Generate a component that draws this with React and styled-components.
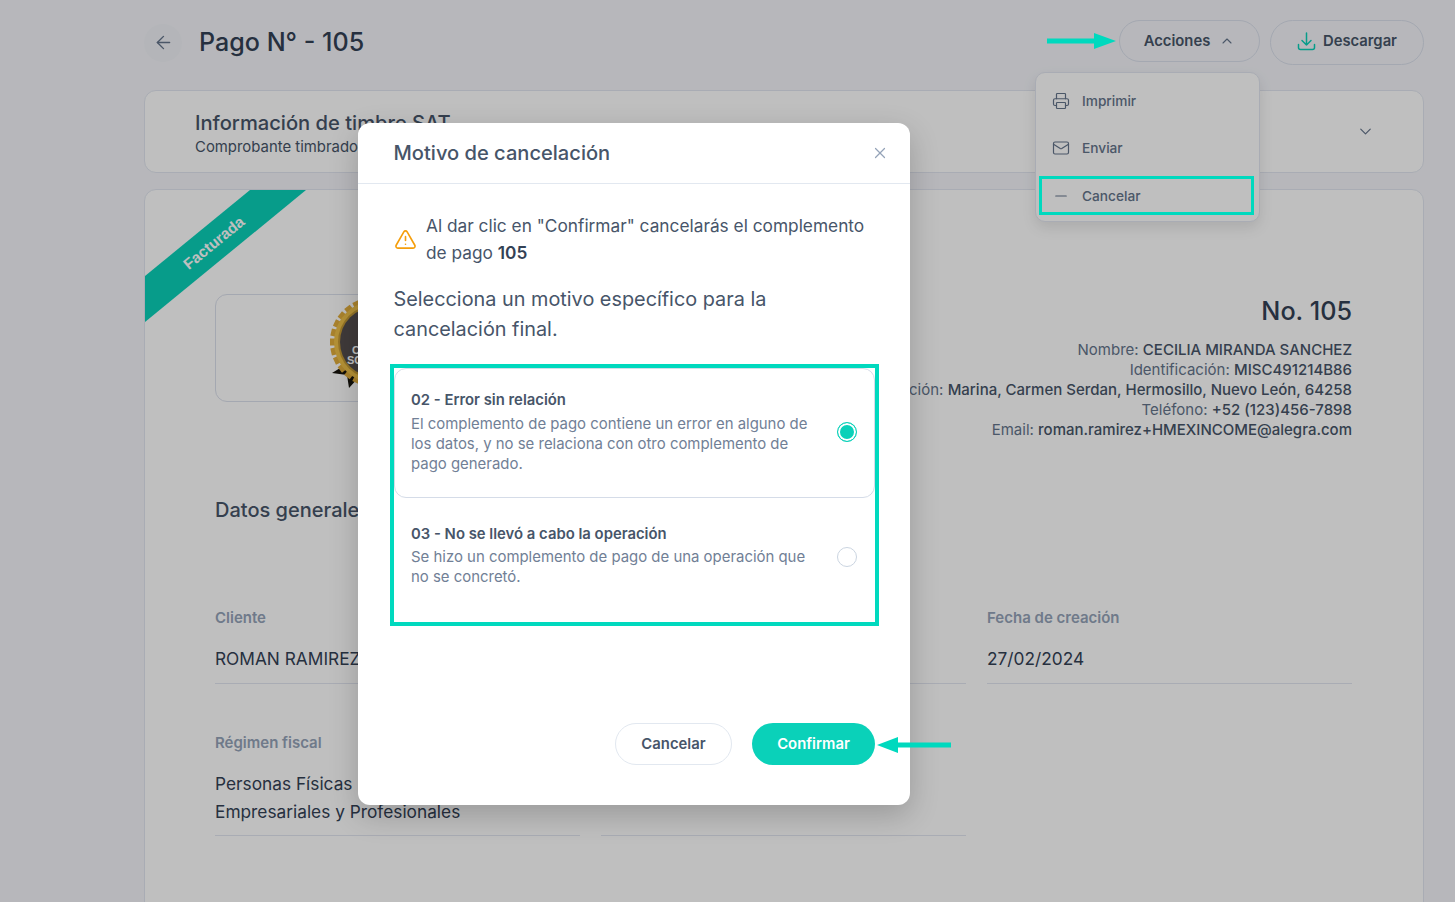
import styled, { createGlobalStyle } from 'styled-components';
import { ArrowLeft, ChevronDown, ChevronUp, Mail, Minus, Printer, TriangleAlert, X } from 'lucide-react';

const GlobalStyle = createGlobalStyle`
  html, body {
    margin: 0;
    height: 100%;
    overflow: hidden;
    background: #f4f5fa;
    font-family: Inter, "Noto Sans", sans-serif;
    color: #334155;
  }
  * { box-sizing: border-box; }
  #root { height: 100%; }
`;

const TEAL = '#00d9be';

export default function App() {
  return (
    <>
      <GlobalStyle />
      <Page>
        <Header>
          <TitleGroup>
            <BackButton><ArrowLeft size={21} strokeWidth={1.6} /></BackButton>
            <Title>Pago N° - 105</Title>
          </TitleGroup>
          <Actions>
            <ActionsWrap>
              <PillButton $width={141} $height={42}>
                Acciones <ActionsChevron size={16} color="#64748b" strokeWidth={1.6} />
              </PillButton>
              <Menu>
                <MenuItem><Printer size={18} strokeWidth={1.6} />Imprimir</MenuItem>
                <MenuItem><Mail size={18} strokeWidth={1.6} />Enviar</MenuItem>
                <MenuItem><Minus size={18} strokeWidth={1.6} />Cancelar</MenuItem>
              </Menu>
            </ActionsWrap>
            <PillButton $width={154} $height={45}>
              <DownloadIcon />
              Descargar
            </PillButton>
          </Actions>
        </Header>

        <StampCard>
          <div>
            <CardTitle>Información de timbre SAT</CardTitle>
            <CardSubtitle>Comprobante timbrado</CardSubtitle>
          </div>
          <StampChevron size={19} color="#64748b" strokeWidth={1.5} />
        </StampCard>

        <DetailCard>
          <Ribbon><RibbonText>Facturada</RibbonText></Ribbon>
          <TopRow>
            <LogoBox><Seal /></LogoBox>
            <Summary>
              <Number>No. 105</Number>
              <Info>
                <div>Nombre: <b>CECILIA MIRANDA SANCHEZ</b></div>
                <div>Identificación: <b>MISC491214B86</b></div>
                <div>Dirección: <b>Marina, Carmen Serdan, Hermosillo, Nuevo León, 64258</b></div>
                <div>Teléfono: <b>+52 (123)456-7898</b></div>
                <div>Email: <b>roman.ramirez+HMEXINCOME@alegra.com</b></div>
              </Info>
            </Summary>
          </TopRow>
          <SectionTitle>Datos generales</SectionTitle>
          <Fields>
            <Field>
              <FieldLabel>Cliente</FieldLabel>
              <FieldValue>ROMAN RAMIREZ</FieldValue>
            </Field>
            <Field>
              <FieldLabel />
              <FieldValue />
            </Field>
            <Field>
              <FieldLabel>Fecha de creación</FieldLabel>
              <FieldValue>27/02/2024</FieldValue>
            </Field>
            <Field>
              <FieldLabel>Régimen fiscal</FieldLabel>
              <FieldValue>Personas Físicas<br />Empresariales y Profesionales</FieldValue>
            </Field>
            <Field>
              <FieldLabel />
              <FieldValue />
            </Field>
          </Fields>
        </DetailCard>
      </Page>

      <Overlay>
        <Modal>
          <ModalHeader>
            <ModalTitle>Motivo de cancelación</ModalTitle>
            <X size={18} color="#94a3b8" strokeWidth={1.6} />
          </ModalHeader>
          <ModalBody>
            <Warning>
              <TriangleAlert size={23} color="#f59e0b" strokeWidth={1.7} />
              <span>Al dar clic en "Confirmar" cancelarás el complemento de pago <b>105</b></span>
            </Warning>
            <Prompt>Selecciona un motivo específico para la cancelación final.</Prompt>
            <Options>
              <Option $selected>
                <OptionText>
                  <OptionTitle>02 - Error sin relación</OptionTitle>
                  <OptionDesc>El complemento de pago contiene un error en alguno de los datos, y no se relaciona con otro complemento de pago generado.</OptionDesc>
                </OptionText>
                <Radio $selected />
              </Option>
              <Option>
                <OptionText>
                  <OptionTitle>03 - No se llevó a cabo la operación</OptionTitle>
                  <OptionDesc>Se hizo un complemento de pago de una operación que no se concretó.</OptionDesc>
                </OptionText>
                <Radio />
              </Option>
            </Options>
          </ModalBody>
          <ModalFooter>
            <OutlineButton>Cancelar</OutlineButton>
            <ConfirmButton>Confirmar</ConfirmButton>
          </ModalFooter>
        </Modal>

        <TopArrow viewBox="0 0 69 16">
          <path d="M0 5.500h47V0l22 8-22 8v-5.500H0z" fill={TEAL} />
        </TopArrow>
        <BottomArrow viewBox="0 0 74 16">
          <path d="M74 5.500H21V0L0 8l21 8v-5.500h53z" fill={TEAL} />
        </BottomArrow>
        <MenuHighlight />
        <OptionsHighlight />
      </Overlay>
    </>
  );
}

function DownloadIcon() {
  return (
    <svg width="19" height="20" viewBox="0 0 19 20" fill="none" stroke="#0ad1b9" strokeWidth="1.5" strokeLinecap="round" strokeLinejoin="round">
      <path d="M9.500 2v12M5 9.500l4.500 4.500L14 9.500" />
      <path d="M1.500 13.500v3a2 2 0 0 0 2 2h12a2 2 0 0 0 2-2v-3" />
    </svg>
  );
}

// sello dorado del logo, casi todo queda tapado por el modal
function Seal() {
  const teeth = Array.from({ length: 28 }, (_, i) => i * (360 / 28));
  return (
    <svg width="92" height="92" viewBox="0 0 92 92">
      <path d="M3 76 16 68l14 12-10 11-2-13z" fill="#17140d" />
      <path d="M89 76 76 68 62 80l10 11 2-13z" fill="#17140d" />
      {teeth.map((a) => (
        <rect key={a} x="42.500" y="0" width="7" height="8" fill="#e2ae3c" transform={`rotate(${a} 46 45)`} />
      ))}
      <circle cx="46" cy="45" r="41" fill="#f0c248" />
      <circle cx="46" cy="45" r="37" fill="#c59a34" />
      <circle cx="46" cy="45" r="35" fill="#544e4e" />
      <text x="23" y="57" fontSize="11" fontWeight="700" fill="#fff" fontFamily="Liberation Sans, sans-serif">CFD</text>
      <text x="18" y="67" fontSize="11" fontWeight="700" fill="#fff" fontFamily="Liberation Sans, sans-serif">SCS</text>
    </svg>
  );
}

const Page = styled.div`
  padding: 20px 31px 0 144px;
  display: flex;
  flex-direction: column;
`;

const Header = styled.header`
  display: flex;
  justify-content: space-between;
  align-items: center;
  height: 45px;
  margin-bottom: 25px;
`;

const TitleGroup = styled.div`
  display: flex;
  align-items: center;
  gap: 17px;
`;

const BackButton = styled.div`
  width: 38px;
  height: 38px;
  border-radius: 50%;
  background: #f1f2f7;
  color: #64748b;
  display: flex;
  align-items: center;
  justify-content: center;
`;

const Title = styled.h1`
  margin: 0;
  padding-bottom: 2px;
  font-size: 25.100px;
  font-weight: 500;
  color: #334155;
`;

const Actions = styled.div`
  display: flex;
  align-self: flex-start;
  gap: 10px;
`;

const ActionsWrap = styled.div`
  position: relative;
`;

const ActionsChevron = styled(ChevronUp)`
  margin-left: 2px;
`;

const PillButton = styled.div`
  width: ${(p) => p.$width}px;
  height: ${(p) => p.$height}px;
  border: 1px solid #dbe0ec;
  border-radius: 999px;
  display: flex;
  align-items: center;
  justify-content: center;
  gap: 7px;
  font-size: 14.800px;
  font-weight: 600;
  color: #475569;
  padding-bottom: ${(p) => (p.$height > 42 ? 4 : 1)}px;
`;

const Menu = styled.div`
  position: absolute;
  z-index: 1;
  top: 52px;
  right: 0;
  width: 225px;
  height: 150px;
  padding: 4px 0;
  background: #fff;
  border: 1px solid #e2e6f0;
  border-radius: 10px;
  box-shadow: 0 6px 14px rgba(0, 0, 0, 0.1);
`;

const MenuItem = styled.div`
  height: 47.500px;
  padding-left: 16px;
  display: flex;
  align-items: center;
  gap: 12px;
  font-size: 13.700px;
  font-weight: 500;
  color: #64748b;
`;

const Card = styled.section`
  background: #fff;
  border: 1px solid #e2e6f0;
  border-radius: 12px;
`;

const StampCard = styled(Card)`
  height: 83px;
  margin-bottom: 16px;
  padding: 4px 48px 0 50px;
  display: flex;
  align-items: center;
  justify-content: space-between;
`;

const StampChevron = styled(ChevronDown)`
  margin-top: -4px;
`;

const CardTitle = styled.div`
  font-size: 20.150px;
  font-weight: 500;
  line-height: 26px;
  color: #475569;
`;

const CardSubtitle = styled.div`
  font-size: 14.900px;
  line-height: 22px;
  color: #475569;
`;

const DetailCard = styled(Card)`
  position: relative;
  height: 900px;
  padding: 104px 71px 0 70px;
`;

const Ribbon = styled.div`
  position: absolute;
  top: 0;
  left: 0;
  width: 161px;
  height: 132px;
  background: #0ad1b9;
  clip-path: polygon(105px 0, 161px 0, 0 132px, 0 86px);
`;

const RibbonText = styled.span`
  position: absolute;
  left: 29px;
  top: 44px;
  width: 80px;
  text-align: center;
  font-family: "Liberation Sans", sans-serif;
  font-size: 15.400px;
  font-weight: 700;
  color: #fff;
  transform: rotate(-39.300deg);
`;

const TopRow = styled.div`
  display: flex;
  justify-content: space-between;
  align-items: flex-start;
`;

const LogoBox = styled.div`
  width: 320px;
  height: 108px;
  border: 1px solid #dbe0ec;
  border-radius: 12px;
  display: flex;
  align-items: center;
  justify-content: center;
  padding-bottom: 10px;
`;

const Summary = styled.div`
  text-align: right;
`;

const Number = styled.div`
  font-size: 25.200px;
  font-weight: 500;
  line-height: 34px;
  margin-bottom: 12px;
  color: #334155;
`;

const Info = styled.div`
  font-size: 15px;
  line-height: 20px;
  color: #64748b;

  b {
    font-weight: 500;
    color: #475569;
  }
`;

const SectionTitle = styled.h2`
  margin: 56px 0 84px;
  font-size: 20px;
  line-height: 28px;
  font-weight: 500;
  color: #475569;
`;

const Fields = styled.div`
  display: grid;
  grid-template-columns: repeat(3, 365px);
  column-gap: 21px;
  row-gap: 49px;
`;

const Field = styled.div`
  padding-bottom: 10px;
  border-bottom: 1px solid #e2e6f0;
`;

const FieldLabel = styled.div`
  min-height: 20px;
  margin-bottom: 17px;
  font-size: 15px;
  line-height: 20px;
  font-weight: 600;
  color: #94a3b8;
`;

const FieldValue = styled.div`
  min-height: 28px;
  font-size: 17.300px;
  line-height: 1.6;
  color: #334155;
`;

const Overlay = styled.div`
  position: absolute;
  z-index: 2;
  inset: 0;
  background: rgba(0, 0, 0, 0.25);
  padding: 123px 0 0 358px;
`;

const Modal = styled.div`
  width: 552px;
  height: 682px;
  background: #fff;
  border-radius: 12px;
  box-shadow: 0 10px 30px rgba(0, 0, 0, 0.2);
  display: flex;
  flex-direction: column;
`;

const ModalHeader = styled.div`
  height: 61px;
  flex-shrink: 0;
  padding: 0 21px 0 35.500px;
  border-bottom: 1px solid #e2e8f0;
  display: flex;
  align-items: center;
  justify-content: space-between;
`;

const ModalTitle = styled.h3`
  margin: 0;
  font-size: 20.100px;
  font-weight: 500;
  color: #475569;
`;

const ModalBody = styled.div`
  padding: 28px 35px 0 35.500px;
`;

const Warning = styled.div`
  display: flex;
  align-items: center;
  gap: 9.500px;
  font-size: 17.300px;
  line-height: 27px;
  color: #475569;

  svg {
    flex-shrink: 0;
  }

  b {
    font-weight: 600;
    color: #334155;
  }
`;

const Prompt = styled.p`
  margin: 18px 0 24px;
  font-size: 19.850px;
  line-height: 30px;
  color: #475569;
`;

const Options = styled.div`
  display: flex;
  flex-direction: column;
`;

const Option = styled.div`
  min-height: 112px;
  padding: 21px 17px 23px 16.500px;
  border: 1px solid ${(p) => (p.$selected ? '#d5dce8' : 'transparent')};
  border-radius: 12px;
  margin-bottom: 4px;
  display: flex;
  justify-content: space-between;
  gap: 20px;
`;

const OptionText = styled.div`
  flex: 1;
`;

const OptionTitle = styled.div`
  font-size: 14.850px;
  line-height: 20px;
  font-weight: 600;
  color: #475569;
  margin-bottom: 3.500px;
`;

const OptionDesc = styled.div`
  font-size: 14.930px;
  line-height: 20px;
  color: #718096;
`;

const Radio = styled.div`
  width: 20px;
  height: 20px;
  flex-shrink: 0;
  align-self: center;
  border-radius: 50%;
  border: 1px solid ${(p) => (p.$selected ? '#0ad1b9' : '#cbd5e1')};
  background: ${(p) => (p.$selected ? '#0ad1b9' : '#fff')};
  box-shadow: ${(p) => (p.$selected ? 'inset 0 0 0 2px #fff' : 'none')};
`;

const ModalFooter = styled.div`
  margin-top: auto;
  padding: 0 35px 40px;
  display: flex;
  justify-content: flex-end;
  gap: 20px;
`;

const OutlineButton = styled.div`
  width: 117px;
  height: 42px;
  padding-bottom: 1px;
  border: 1px solid #e2e8f0;
  border-radius: 999px;
  display: flex;
  align-items: center;
  justify-content: center;
  font-size: 14.850px;
  font-weight: 600;
  color: #475569;
`;

const ConfirmButton = styled(OutlineButton)`
  width: 123px;
  border: none;
  background: #0ad1b9;
  color: #fff;
  font-weight: 600;
`;

const TopArrow = styled.svg`
  position: absolute;
  left: 1047px;
  top: 32.500px;
  width: 69px;
  height: 16px;
`;

const BottomArrow = styled.svg`
  position: absolute;
  left: 877px;
  top: 737px;
  width: 74px;
  height: 16px;
`;

const MenuHighlight = styled.div`
  position: absolute;
  left: 1039px;
  top: 176px;
  width: 215px;
  height: 39px;
  border: 3px solid ${TEAL};
`;

const OptionsHighlight = styled.div`
  position: absolute;
  left: 390px;
  top: 364px;
  width: 489px;
  height: 262px;
  border: 4px solid ${TEAL};
`;
